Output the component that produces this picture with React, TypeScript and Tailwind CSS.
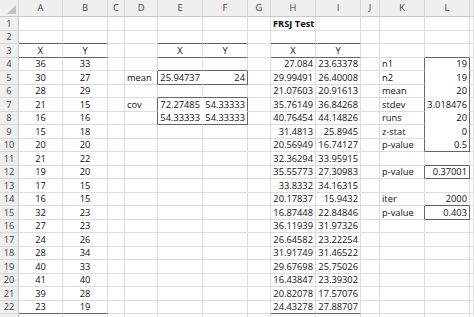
type Align = 'l' | 'c' | 'r'
type CellData = { t: string; a: Align; b?: boolean }

const COLS = ['A', 'B', 'C', 'D', 'E', 'F', 'G', 'H', 'I', 'J', 'K', 'L', '']
const ROWS = Array.from({ length: 23 }, (_, i) => i + 1)

const ab: [number, number][] = [
  [36, 33], [30, 27], [28, 29], [21, 15], [16, 16], [15, 18], [20, 20], [21, 22], [19, 20], [17, 15],
  [16, 15], [32, 23], [27, 23], [24, 26], [28, 34], [40, 33], [41, 40], [39, 28], [23, 19],
]

const hi: [string, string][] = [
  ['27.084', '23.63378'], ['29.99491', '26.40008'], ['21.07603', '20.91613'], ['35.76149', '36.84268'],
  ['40.76454', '44.14826'], ['31.4813', '25.8945'], ['20.56949', '16.74127'], ['32.36294', '33.95915'],
  ['35.55773', '27.30983'], ['33.8332', '34.16315'], ['20.17837', '15.9432'], ['16.87448', '22.84846'],
  ['36.11939', '31.97326'], ['26.64582', '23.22254'], ['31.91749', '31.46522'], ['29.67698', '25.75026'],
  ['16.43847', '23.39302'], ['20.82078', '17.57076'], ['24.43278', '27.88707'],
]

const stats: [number, string, string][] = [
  [4, 'n1', '19'], [5, 'n2', '19'], [6, 'mean', '20'], [7, 'stdev', '3.018476'], [8, 'runs', '20'],
  [9, 'z-stat', '0'], [10, 'p-value', '0.5'], [12, 'p-value', '0.37001'], [14, 'iter', '2000'],
  [15, 'p-value', '0.403'],
]

const cells: Record<string, CellData> = {
  '1,7': { t: 'FRSJ Test', a: 'l', b: true },
  '3,0': { t: 'X', a: 'c' }, '3,1': { t: 'Y', a: 'c' },
  '3,4': { t: 'X', a: 'c' }, '3,5': { t: 'Y', a: 'c' },
  '3,7': { t: 'X', a: 'c' }, '3,8': { t: 'Y', a: 'c' },
  '5,3': { t: 'mean', a: 'l' }, '7,3': { t: 'cov', a: 'l' },
  '5,4': { t: '25.94737', a: 'r' }, '5,5': { t: '24', a: 'r' },
  '7,4': { t: '72.27485', a: 'r' }, '7,5': { t: '54.33333', a: 'r' },
  '8,4': { t: '54.33333', a: 'r' }, '8,5': { t: '54.33333', a: 'r' },
}
ab.forEach(([x, y], i) => {
  cells[`${i + 4},0`] = { t: String(x), a: 'c' }
  cells[`${i + 4},1`] = { t: String(y), a: 'c' }
})
hi.forEach(([x, y], i) => {
  cells[`${i + 4},7`] = { t: x, a: 'r' }
  cells[`${i + 4},8`] = { t: y, a: 'r' }
})
stats.forEach(([r, k, v]) => {
  cells[`${r},10`] = { t: k, a: 'l' }
  cells[`${r},11`] = { t: v, a: 'r' }
})

// dark lines under a cell / right of a cell
const darkBottom = new Set<string>()
const darkRight = new Set<string>()
const hideBottom = new Set<string>()
const hideRight = new Set<string>()

;[0, 1, 4, 5, 7, 8].forEach((c) => {
  darkBottom.add(`2,${c}`)
  darkBottom.add(`3,${c}`)
})
;[0, 1, 7, 8].forEach((c) => darkBottom.add(`22,${c}`))

// box around a block of cells
function box(r1: number, r2: number, c1: number, c2: number) {
  for (let c = c1; c <= c2; c++) {
    darkBottom.add(`${r1 - 1},${c}`)
    darkBottom.add(`${r2},${c}`)
    for (let r = r1; r < r2; r++) hideBottom.add(`${r},${c}`)
  }
  for (let r = r1; r <= r2; r++) {
    darkRight.add(`${r},${c1 - 1}`)
    darkRight.add(`${r},${c2}`)
    for (let c = c1; c < c2; c++) hideRight.add(`${r},${c}`)
  }
}
box(5, 5, 4, 5)
box(7, 8, 4, 5)
box(4, 10, 11, 11)
box(12, 12, 11, 11)
box(15, 15, 11, 11)

function Cell({ r, c }: { r: number; c: number }) {
  const k = `${r},${c}`
  const d = cells[k]
  const bb = darkBottom.has(k)
    ? 'border-b-[#666]'
    : hideBottom.has(k)
      ? 'border-b-white'
      : 'border-b-[#dcdcdc]'
  const br = darkRight.has(k)
    ? 'border-r-[#666]'
    : hideRight.has(k)
      ? 'border-r-white'
      : 'border-r-[#dcdcdc]'
  const al = !d ? '' : d.a === 'c' ? 'justify-center' : d.a === 'r' ? 'justify-end pr-[2px]' : 'justify-start pl-[2px]'
  return (
    <div className={`flex items-center border-b border-r whitespace-nowrap ${bb} ${br} ${al}`}>
      {d && <span className={d.b ? 'font-bold' : ''}>{d.t}</span>}
    </div>
  )
}

export default function App() {
  return (
    <div className="h-[317px] w-[474px] overflow-hidden bg-white font-['Open_Sans',sans-serif] text-[9.3px] leading-none text-[#111]">
      <div className="grid grid-cols-[19px_44px_45px_17px_33px_45px_45px_23px_45px_45px_19px_45px_45px_1fr] grid-rows-[17px_repeat(23,13.5px)]">
        {/* column headers */}
        <div className="relative border-b border-r border-b-[#c8c8c8] border-r-[#d6d6d6] bg-[#efefef]">
          <svg className="absolute bottom-[2px] right-[2px]" width="9" height="9" viewBox="0 0 9 9">
            <polygon points="9,0 9,9 0,9" fill="#c2c2c2" />
          </svg>
        </div>
        {COLS.map((l, i) => (
          <div
            key={i}
            className="flex items-center justify-center border-b border-r border-b-[#c8c8c8] border-r-[#d6d6d6] bg-[#efefef] text-[#444]"
          >
            {l}
          </div>
        ))}
        {ROWS.map((r) => (
          <div key={r} className="contents">
            <div className="flex items-center justify-center border-b border-r border-b-[#d6d6d6] border-r-[#c8c8c8] bg-[#efefef] text-[#444]">
              {r < 23 ? r : ''}
            </div>
            {COLS.map((_, c) => (
              <Cell key={c} r={r} c={c} />
            ))}
          </div>
        ))}
      </div>
    </div>
  )
}
